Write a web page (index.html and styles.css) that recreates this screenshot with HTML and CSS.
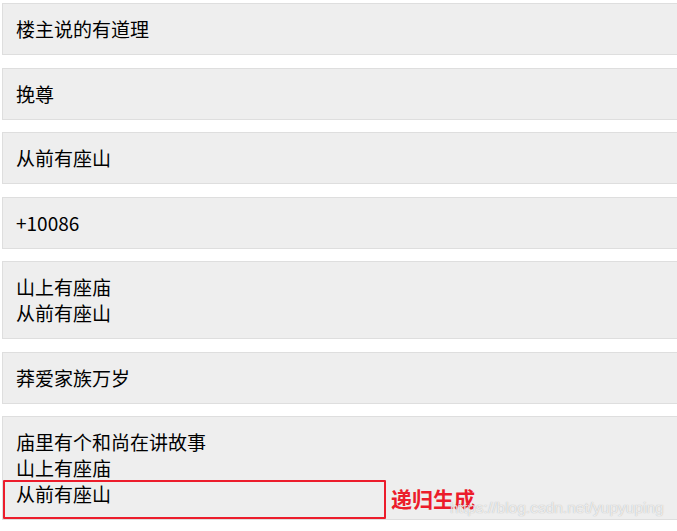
FILE: index.html
```html
<!DOCTYPE html>
<html lang="zh">
<head>
<meta charset="utf-8">
<title>递归生成</title>
<link rel="stylesheet" href="styles.css">
</head>
<body>
<div class="list">
  <div class="item">楼主说的有道理</div>
  <div class="item">挽尊</div>
  <div class="item">从前有座山</div>
  <div class="item">+10086</div>
  <div class="item">山上有座庙<br>从前有座山</div>
  <div class="item">莽爱家族万岁</div>
  <div class="item">庙里有个和尚在讲故事<br>山上有座庙<br>从前有座山</div>
</div>
<div class="mark"></div>
<div class="label">递归生成</div>
<div class="watermark">https://blog.csdn.net/yupyuping</div>
</body>
</html>
```
FILE: styles.css
```css
html, body {
  margin: 0;
  padding: 0;
  background: #fff;
  overflow: hidden;
}
body {
  width: 677px;
  height: 531px;
  position: relative;
  font-family: "Noto Sans CJK SC", "Noto Sans", sans-serif;
  color: #000;
}
.list {
  padding: 3px 0 0 2px;
  display: flex;
  flex-direction: column;
  gap: 12.5px;
  width: 700px;
}
.item {
  background: #eeeeee;
  border: 1px solid #dedede;
  padding: 12px 13px;
  font-size: 19px;
  line-height: 26px;
  font-weight: 400;
}
.mark {
  position: absolute;
  left: 3px;
  top: 480px;
  width: 379px;
  height: 35px;
  border: 2px solid #ec1c2b;
  border-radius: 1px;
}
.label {
  position: absolute;
  left: 391px;
  top: 483px;
  font-size: 21px;
  line-height: 30px;
  font-weight: bold;
  color: #ec1c2b;
}
.watermark {
  position: absolute;
  left: 450px;
  top: 497px;
  font-family: "Liberation Sans", Arial, sans-serif;
  font-size: 15.5px;
  line-height: 22px;
  color: rgba(255, 255, 255, 0.75);
  text-shadow: 0 0 1px rgba(120, 120, 120, 0.6);
}
```
